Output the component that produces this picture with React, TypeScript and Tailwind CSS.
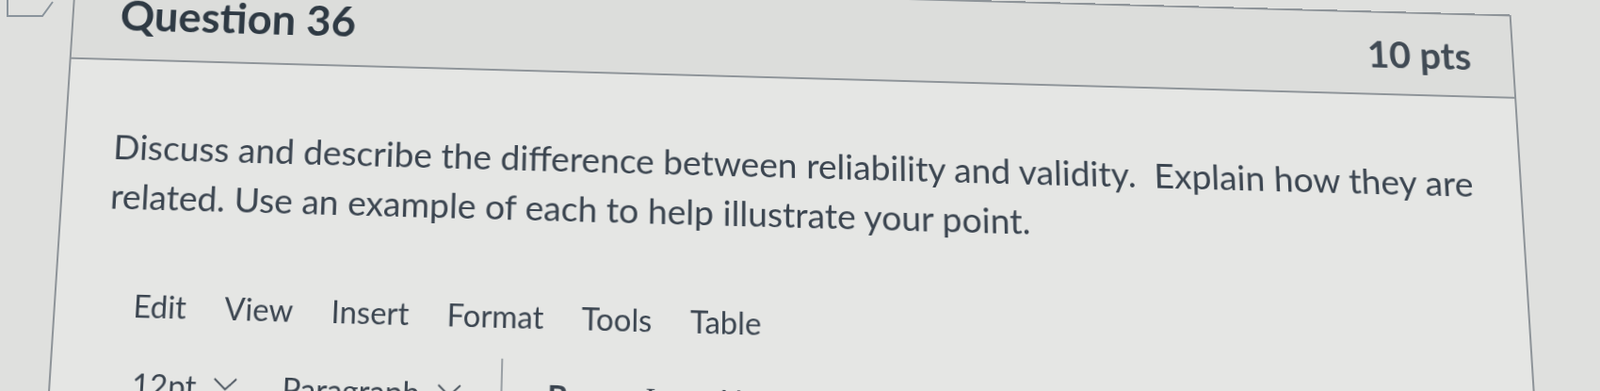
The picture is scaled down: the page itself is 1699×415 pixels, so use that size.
import React from "react";

const menuItems = ["Edit", "View", "Insert", "Format", "Tools", "Table"];

function Chevron() {
  return (
    <svg width="27" height="16" viewBox="0 0 27 16" className="ml-[17px] mt-[9px] text-[#4a545e]">
      <polyline points="2,2 13.5,13 25,2" fill="none" stroke="currentColor" strokeWidth="1.8" />
    </svg>
  );
}

function Toolbar() {
  return (
    <div className="flex items-start text-[32.5px] leading-[1.2] text-[#3b4550]">
      <div className="flex w-[157px] items-start">
        <span>12pt</span>
        <Chevron />
      </div>
      <div className="flex w-[228px] items-start">
        <span>Paragraph</span>
        <Chevron />
      </div>
      <div className="mt-[-18px] h-[60px] w-[2px] bg-[#9aa0a5]" />
      <div className="ml-[47px] w-[100px] font-bold">B</div>
      <div className="w-[80px] italic" style={{ fontFamily: "'Liberation Serif', serif" }}>
        I
      </div>
      <div className="w-[88px] underline">U</div>
      <div>A</div>
    </div>
  );
}

export default function App() {
  return (
    <div
      className="relative h-[415px] w-[1699px] overflow-hidden bg-[#dfe0de]"
      style={{ fontFamily: "Lato, 'Noto Sans', sans-serif" }}
    >
      {/* flag marker, left of the card */}
      <svg width="70" height="30" viewBox="0 0 70 30" className="absolute left-0 top-0">
        <polyline
          points="8,-4 8,17 45,17 56,2"
          fill="none"
          stroke="#8a949c"
          strokeWidth="2"
        />
      </svg>

      {/* photo was taken at a slight angle */}
      <div className="h-[415px] w-[1699px] origin-center pl-[65px] [transform:perspective(1500px)_rotateX(7deg)_skewY(1.6deg)]">
        <div className="mt-[-10px] w-[1551px] border-2 border-[#8e9499] bg-[#e5e6e4]">
          <div className="flex h-[90px] items-start justify-between border-b-2 border-[#8e9499] bg-[#dcdddb] pl-[50px] pr-[44px]">
            <h2 className="mt-[17px] text-[46px] font-bold leading-none text-[#2f3a44]">Question 36</h2>
            <span className="mt-[25px] text-[40px] font-bold leading-none text-[#414b55]">10 pts</span>
          </div>

          <div className="pl-[51px] pt-[66px]">
            <p className="w-[1490px] text-[37.2px] leading-[53px] text-[#3b4550]">
              Discuss and describe the difference between reliability and validity.&nbsp; Explain how they are
              <br />
              related. Use an example of each to help illustrate your point.
            </p>

            <div className="mt-[70px] flex gap-[40px] pl-[31px] text-[32.5px] leading-[1.2] text-[#3b4550]">
              {menuItems.map((m) => (
                <span key={m}>{m}</span>
              ))}
            </div>

            <div className="mt-[43px] pl-[34px]">
              <Toolbar />
            </div>
            <div className="h-[200px]" />
          </div>
        </div>
      </div>
    </div>
  );
}
